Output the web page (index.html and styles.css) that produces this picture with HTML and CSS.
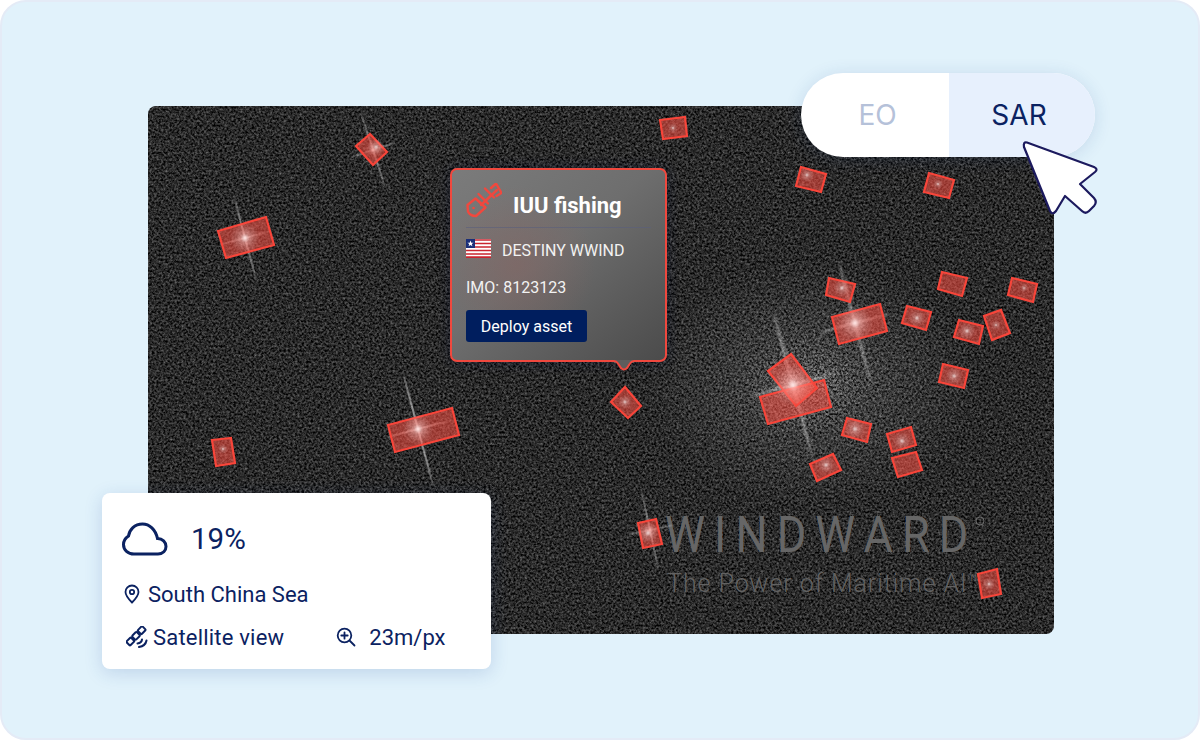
FILE: index.html
```html
<!DOCTYPE html>
<html>
<head>
    <title>EO / SAR satellite view</title>
    <link rel="stylesheet" href="styles.css">
</head>
<body>
    <div class="frame">
        <!-- SAR image with detected vessels -->
        <svg class="sar-map" viewBox="148 106 906 528" width="906" height="528">
            <defs>
                <filter id="grain" x="0" y="0" width="100%" height="100%" color-interpolation-filters="sRGB">
                    <feTurbulence type="fractalNoise" baseFrequency="0.44" numOctaves="3" seed="7"/>
                    <feGaussianBlur stdDeviation="0.6"/>
                    <feColorMatrix type="matrix" values="0.62 0 0 0 -0.145  0.62 0 0 0 -0.145  0.62 0 0 0 -0.145  0 0 0 0 1"/>
                </filter>
                <filter id="speckle" x="0" y="0" width="100%" height="100%" color-interpolation-filters="sRGB">
                    <feTurbulence type="fractalNoise" baseFrequency="0.45" numOctaves="3" seed="21" result="n"/>
                    <feColorMatrix in="n" type="matrix" values="0 0 0 0 1  0 0 0 0 1  0 0 0 0 1  3 0 0 0 -1.1" result="a"/>
                    <feComposite in="SourceGraphic" in2="a" operator="in"/>
                </filter>
                <filter id="soft" x="-50%" y="-50%" width="200%" height="200%">
                    <feGaussianBlur stdDeviation="0.5"/>
                </filter>
                <radialGradient id="haze">
                    <stop offset="0" stop-color="#fff" stop-opacity="0.5"/>
                    <stop offset="0.4" stop-color="#fff" stop-opacity="0.22"/>
                    <stop offset="1" stop-color="#fff" stop-opacity="0"/>
                </radialGradient>
                <radialGradient id="core">
                    <stop offset="0" stop-color="#fff" stop-opacity="0.75"/>
                    <stop offset="0.3" stop-color="#fff" stop-opacity="0.25"/>
                    <stop offset="1" stop-color="#fff" stop-opacity="0"/>
                </radialGradient>
                <g id="star">
                    <ellipse class="ray" cx="0" cy="0" rx="0.7" ry="40"/>
                    <ellipse class="ray" cx="0" cy="0" rx="24" ry="0.6"/>
                    <circle cx="0" cy="0" r="8" fill="url(#core)"/>
                </g>
                <g id="dot">
                    <circle cx="0" cy="0" r="7" fill="url(#core)"/>
                </g>
            </defs>

            <rect x="148" y="106" width="906" height="528" filter="url(#grain)"/>
            <ellipse cx="810" cy="385" rx="170" ry="125" fill="url(#haze)" filter="url(#speckle)"/>

            <!-- watermark -->
            <text class="mark-name" transform="translate(665 552) scale(0.9 1)" textLength="337">WINDWARD</text>
            <circle class="mark-dot" cx="980" cy="521" r="4"/>
            <text class="mark-tag" x="667" y="592" textLength="316">The Power of Maritime AI™</text>

            <!-- glints under the boxes -->
            <use href="#star" transform="translate(245 238) rotate(-15) scale(1.1)"/>
            <use href="#star" transform="translate(373 150) rotate(-18) scale(1)"/>
            <use href="#star" transform="translate(418 429) rotate(-15) scale(1.45)"/>
            <use href="#star" transform="translate(793 385) rotate(-15) scale(1.9)"/>
            <use href="#star" transform="translate(855 323) rotate(-15) scale(1.6)"/>
            <use href="#star" transform="translate(650 530) rotate(-12) scale(1)"/>

            <!-- vessels -->
            <polygon class="ship" points="218,231 266,217 274,245 226,258"/>
            <polygon class="ship" points="356,146 370,134 387,152 373,165"/>
            <polygon class="ship" points="660,120 685,117 687,136 663,139"/>
            <polygon class="ship" points="801,167 826,174 821,192 796,186"/>
            <polygon class="ship" points="929,173 954,180 949,198 924,192"/>
            <polygon class="ship" points="829,278 855,284 850,302 826,295"/>
            <polygon class="ship" points="832,317 880,304 887,331 839,344"/>
            <polygon class="ship" points="907,306 931,312 926,330 902,323"/>
            <polygon class="ship" points="942,272 967,278 962,296 938,289"/>
            <polygon class="ship" points="1012,278 1037,284 1033,302 1008,295"/>
            <polygon class="ship" points="959,320 983,326 979,344 954,337"/>
            <polygon class="ship" points="1001,310 1010,333 992,340 984,316"/>
            <polygon class="ship" points="943,364 968,370 964,388 939,382"/>
            <polygon class="ship" points="760,397 824,380 831,407 768,424"/>
            <polygon class="ship" points="791,354 817,388 796,406 768,371"/>
            <polygon class="ship" points="847,418 871,424 867,442 842,435"/>
            <polygon class="ship" points="887,434 911,427 916,445 892,452"/>
            <polygon class="ship" points="892,458 916,452 922,470 898,477"/>
            <polygon class="ship" points="810,464 833,454 841,470 817,481"/>
            <polygon class="ship" points="625,387 641,406 628,418 611,402"/>
            <polygon class="ship" points="388,425 452,408 459,435 395,452"/>
            <polygon class="ship" points="212,440 231,438 235,463 216,466"/>
            <polygon class="ship" points="638,523 656,519 662,544 643,548"/>
            <polygon class="ship" points="978,574 997,569 1001,594 982,598"/>

            <!-- bright cores on top of the boxes -->
            <use href="#dot" transform="translate(245 238) scale(2.2)"/>
            <use href="#dot" transform="translate(376 147) scale(1.2)"/>
            <use href="#dot" transform="translate(418 429) scale(2.2)"/>
            <use href="#dot" transform="translate(855 323) scale(2.6)"/>
            <use href="#dot" transform="translate(793 385) scale(3)"/>
            <use href="#dot" transform="translate(842 288) scale(1.2)"/>
            <use href="#dot" transform="translate(917 318) scale(1.2)"/>
            <use href="#dot" transform="translate(967 331) scale(1.2)"/>
            <use href="#dot" transform="translate(996 325) scale(0.7)"/>
            <use href="#dot" transform="translate(954 376) scale(1.2)"/>
            <use href="#dot" transform="translate(855 429) scale(1.4)"/>
            <use href="#dot" transform="translate(902 441) scale(1.2)"/>
            <use href="#dot" transform="translate(826 465) scale(1.2)"/>
            <use href="#dot" transform="translate(625 402)"/>
            <use href="#dot" transform="translate(223 449) scale(0.7)"/>
            <use href="#dot" transform="translate(673 128) scale(0.7)"/>
            <use href="#dot" transform="translate(807 175)"/>
            <use href="#dot" transform="translate(938 184) scale(0.7)"/>
            <use href="#dot" transform="translate(1024 288) scale(0.6)"/>
            <use href="#dot" transform="translate(648 533) scale(1.5)"/>
            <use href="#dot" transform="translate(989 584) scale(0.9)"/>
        </svg>

        <!-- EO / SAR switch -->
        <div class="mode-switch">
            <div class="mode-option">EO</div>
            <div class="mode-option mode-active">SAR</div>
        </div>

        <svg class="cursor" viewBox="1020 138 82 80" width="82" height="80">
            <path d="M1027 142.500 L1094 167 Q1098.500 169 1095 172 L1080 184 L1094 198 Q1097.500 202 1094 206 L1089 211 Q1085.500 214.500 1082 211 L1065 196 L1056 211 Q1052.500 215.500 1050 211 L1024 147 Q1023 141.500 1027 142.500 Z"/>
        </svg>

        <!-- Vessel popup -->
        <div class="vessel-popup">
            <div class="popup-header">
                <svg class="fish-icon" viewBox="466 181 36 36" width="36" height="36">
                    <path d="M467.500 203 L475.500 196.500 L485.500 205.500 L476 214 Q470 214 468 209.500 Z"/>
                    <path d="M481 203 L497 188"/>
                    <path d="M478.500 192 L488 201.500"/>
                    <path d="M485 186.500 L494 195.500"/>
                    <path d="M491 186 L496 181.500 L501.500 191 L496.500 194"/>
                    <circle class="fish-eye" cx="473.500" cy="206" r="1.300"/>
                </svg>
                <h3 class="popup-title">IUU fishing</h3>
            </div>
            <div class="popup-row">
                <svg class="flag" viewBox="0 0 25 19" width="25" height="19">
                    <rect width="25" height="19" fill="#fff"/>
                    <path d="M0 1h25M0 4.500h25M0 8h25M0 11.500h25M0 15h25M0 18.200h25" stroke="#c9252f" stroke-width="1.700"/>
                    <rect width="9" height="9" fill="#1b2f78"/>
                    <polygon points="4.500,1.500 5.300,3.700 7.600,3.700 5.800,5.100 6.400,7.300 4.500,6 2.600,7.300 3.200,5.100 1.400,3.700 3.700,3.700" fill="#fff"/>
                </svg>
                <span>DESTINY WWIND</span>
            </div>
            <div class="popup-imo">IMO: 8123123</div>
            <button class="deploy-btn">Deploy asset</button>
            <svg class="popup-tail" viewBox="0 0 30 12" width="30" height="12">
                <rect class="tail-fill" x="5" y="0" width="20" height="3"/>
                <path d="M0 1 L5 1 Q7.500 1 9 3.500 L12 8 Q15 11 18 8 L21 3.500 Q22.500 1 25 1 L30 1"/>
            </svg>
        </div>

        <!-- Scene info card -->
        <div class="info-card">
            <div class="info-weather">
                <svg class="cloud-icon" viewBox="0 0 46 36" width="46" height="36">
                    <path d="M12 33 H36 C41 33 44 29.500 44 25.500 C44 21 40.500 17.500 35.500 17.500 C33.500 8.500 27.500 3 20.500 3 C12.500 3 7.500 8.500 6.500 15 C3.500 17 1.500 20 1.500 23.500 C1.500 29 6 33 12 33 Z"/>
                </svg>
                <span class="info-percent">19%</span>
            </div>
            <div class="info-row">
                <svg class="pin-icon" viewBox="0 0 16 20" width="16" height="20">
                    <path d="M8 18.500 C4 14.500 1.500 11.500 1.500 8 C1.500 4.300 4.400 1.500 8 1.500 C11.600 1.500 14.500 4.300 14.500 8 C14.500 11.500 12 14.500 8 18.500 Z"/>
                    <circle cx="8" cy="8" r="2.200"/>
                </svg>
                <span>South China Sea</span>
            </div>
            <div class="info-row info-row-split">
                <div class="info-item">
                    <svg class="sat-icon" viewBox="0 0 22 22" width="22" height="22">
                        <g transform="rotate(-45 10 9.500)">
                            <rect x="-1.500" y="7" width="6.500" height="5.500" rx="1"/>
                            <rect x="6.500" y="7" width="6.500" height="5.500" rx="1"/>
                            <rect x="14.500" y="7" width="6.500" height="5.500" rx="1"/>
                        </g>
                        <path d="M11.500 17.500 Q15.500 17 16 13.500"/>
                        <path d="M13 21 Q19.500 20 20.500 14.500"/>
                    </svg>
                    <span class="sat-label">Satellite view</span>
                </div>
                <div class="info-item info-zoom">
                    <svg class="zoom-icon" viewBox="0 0 20 20" width="20" height="20">
                        <circle cx="8.500" cy="8.500" r="6.800"/>
                        <path d="M8.500 5.300 V11.700 M5.300 8.500 H11.700 M13.500 13.500 L18.500 18.500"/>
                    </svg>
                    <span>23m/px</span>
                </div>
            </div>
        </div>
    </div>
</body>
</html>
```

FILE: styles.css
```css
* {
    box-sizing: border-box;
}
body {
    margin: 0;
    background: #fff;
    font-family: Roboto, "Liberation Sans", sans-serif;
    color: #0b2261;
}
.frame {
    position: relative;
    width: 1200px;
    height: 740px;
    padding: 104px 144px 104px 146px;
    background: #e1f2fb;
    border: 2px solid #e4ebf6;
    border-radius: 26px;
    overflow: hidden;
}
.sar-map {
    display: block;
    border-radius: 8px;
}
.sar-map .ray {
    fill: #fff;
    opacity: 0.5;
    filter: url(#soft);
}
.ship {
    fill: rgba(255, 82, 70, 0.55);
    stroke: #f8453a;
    stroke-width: 2.200;
}
.mark-name {
    font-family: Roboto, sans-serif;
    font-weight: 400;
    font-size: 50px;
    fill: #666;
}
.mark-tag {
    font-family: Roboto, sans-serif;
    font-weight: 300;
    font-size: 25px;
    fill: #626262;
}
.mark-dot {
    fill: none;
    stroke: #6a6a6a;
}

/* EO / SAR switch */
.mode-switch {
    position: absolute;
    left: 799px;
    top: 71px;
    width: 294px;
    height: 84px;
    display: flex;
    border-radius: 42px;
    overflow: hidden;
    background: #fff;
    box-shadow: 0 2px 18px rgba(30, 70, 140, 0.14);
    font-family: Inter, Roboto, sans-serif;
    font-size: 28px;
}
.mode-option {
    display: flex;
    align-items: center;
    justify-content: center;
    width: 148px;
    padding-left: 5px;
    color: #b5c1d9;
}
.mode-active {
    flex: 1;
    padding-left: 0;
    padding-right: 6px;
    background: #e7f0fd;
    color: #0b2261;
}
.cursor {
    position: absolute;
    left: 1018px;
    top: 136px;
}
.cursor path {
    fill: #fff;
    stroke: #1c1a5e;
    stroke-width: 2.200;
    stroke-linejoin: round;
}

/* Vessel popup */
.vessel-popup {
    position: absolute;
    left: 448px;
    top: 166px;
    width: 217px;
    height: 194px;
    padding: 14px 14px 0;
    background:
        radial-gradient(circle at 30% 50%, rgba(150, 95, 90, 0.35), rgba(120, 100, 100, 0) 45%),
        linear-gradient(140deg, #7b7b7b 0%, #6e6e6e 45%, #4b4b4b 100%);
    border: 2px solid #f0483e;
    border-radius: 7px;
    box-shadow: 0 0 14px rgba(10, 20, 50, 0.45);
    color: #f2f2f2;
}
.popup-header {
    display: flex;
    align-items: center;
    gap: 11px;
    height: 44px;
    padding-bottom: 1px;
    border-bottom: 1px solid rgba(90, 95, 125, 0.6);
}
.fish-icon {
    flex: none;
    align-self: flex-start;
    margin-top: -1px;
    fill: none;
    stroke: #f0483e;
    stroke-width: 2.400;
    stroke-linejoin: round;
    stroke-linecap: round;
}
.fish-eye {
    fill: #f0483e;
    stroke: none;
}
.popup-title {
    margin: 0;
    font-size: 22px;
    font-weight: 700;
    color: #fff;
}
.popup-row {
    display: flex;
    align-items: center;
    gap: 11px;
    margin-top: 10px;
    font-size: 16px;
    height: 24px;
}
.flag {
    margin-top: -4px;
}
.popup-imo {
    margin-top: 16px;
    font-size: 16px;
    line-height: 20px;
}
.deploy-btn {
    display: block;
    width: 121px;
    height: 32px;
    margin-top: 12px;
    padding: 0;
    border: none;
    border-radius: 3px;
    background: #001e5e;
    color: #fff;
    font-family: inherit;
    font-size: 16px;
}
.popup-tail {
    position: absolute;
    left: 157px;
    top: 190px;
}
.tail-fill {
    fill: #5d5d5d;
}
.popup-tail path {
    fill: #5d5d5d;
    stroke: #f0483e;
    stroke-width: 2;
}

/* Scene info card */
.info-card {
    position: absolute;
    left: 100px;
    top: 491px;
    width: 389px;
    height: 176px;
    padding: 27px 19px 0 20px;
    background: #fff;
    border-radius: 8px;
    box-shadow: 0 4px 18px rgba(40, 80, 160, 0.18);
}
.info-weather {
    display: flex;
    align-items: center;
    gap: 23px;
    height: 38px;
}
.info-percent {
    font-size: 29.500px;
}
.info-row {
    display: flex;
    align-items: center;
    gap: 8px;
    margin-top: 22px;
    padding-left: 2px;
    height: 28px;
    font-size: 22px;
}
.info-row-split {
    margin-top: 15px;
    padding-left: 4px;
}
.info-item {
    display: flex;
    align-items: center;
    gap: 5px;
}
.sat-label {
    letter-spacing: 0.2px;
}
.info-zoom {
    margin-left: 44px;
    gap: 13px;
}
.cloud-icon {
    flex: none;
    fill: none;
    stroke: #0b2261;
    stroke-width: 3;
}
.pin-icon,
.zoom-icon {
    flex: none;
    fill: none;
    stroke: #0b2261;
    stroke-width: 1.800;
    stroke-linecap: round;
}
.sat-icon {
    flex: none;
    fill: none;
    stroke: #0b2261;
    stroke-width: 2;
    stroke-linecap: round;
}
```
